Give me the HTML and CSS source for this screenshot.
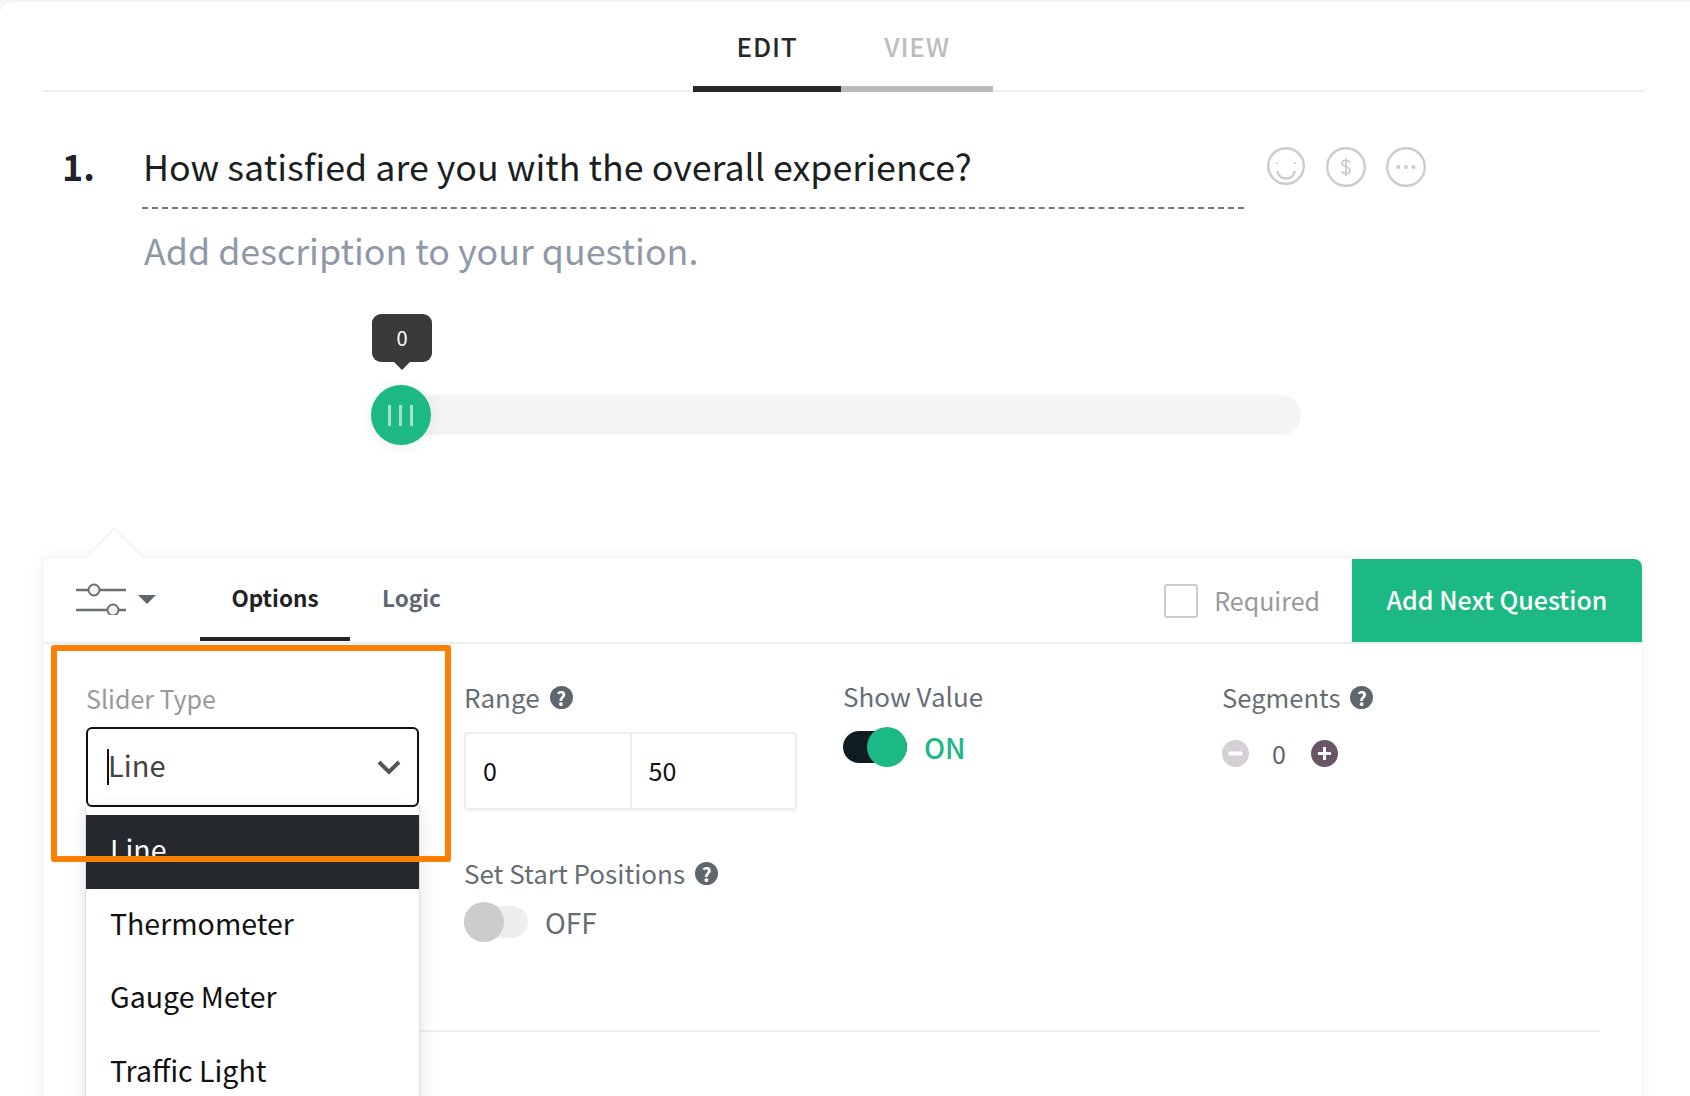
FILE: index.html
```html
<!DOCTYPE html>
<html lang="en">
<head>
<meta charset="utf-8">
<title>Survey question editor</title>
<link rel="stylesheet" href="styles.css">
</head>
<body>
<div class="page">
  <nav class="mode-tabs">
    <a class="mode-tab mode-edit">EDIT</a>
    <a class="mode-tab mode-view">VIEW</a>
  </nav>

  <section class="question">
    <div class="q-number">1.</div>
    <div class="q-main">
      <div class="q-title">How satisfied are you with the overall experience?</div>
      <div class="q-desc">Add description to your question.</div>
    </div>
    <div class="q-icons">
      <svg class="q-icon" width="38" height="38" viewBox="0 0 38 38"><circle cx="19" cy="19" r="17.800"/><path d="M10 24c1.500 5 5 7.500 9 7.500s7.500-2.500 9-7.500"/><circle class="dot" cx="10" cy="16" r="1"/><circle class="dot" cx="28" cy="16" r="1"/></svg>
      <svg class="q-icon" width="40" height="40" viewBox="0 0 40 40"><circle cx="20" cy="20" r="18.800"/><path class="dollar" d="M24 15.500c-.7-1.400-2-2.200-4-2.200-2.300 0-3.900 1.100-3.900 3 0 4.300 8 2.600 8 7.300 0 2-1.800 3.100-4.100 3.100-2 0-3.400-.8-4.200-2.200M20 11v18"/></svg>
      <svg class="q-icon" width="40" height="40" viewBox="0 0 40 40"><circle cx="20" cy="20" r="18.800"/><circle class="dot-big" cx="12.500" cy="20" r="2"/><circle class="dot-big" cx="20" cy="20" r="2"/><circle class="dot-big" cx="27.500" cy="20" r="2"/></svg>
    </div>
  </section>

  <div class="slider">
    <div class="slider-track"></div>
    <div class="slider-thumb"><i></i><i></i><i></i></div>
    <div class="slider-tip">0</div>
  </div>

  <section class="panel">
    <header class="panel-head">
      <div class="type-picker">
        <svg width="50" height="34" viewBox="0 0 50 34" class="sliders-icon"><path d="M0 9h12M24 9h26M0 29h31M43 29h7"/><circle cx="18" cy="9" r="5.500"/><circle cx="37" cy="29" r="5.500"/></svg>
        <span class="caret"></span>
      </div>
      <a class="panel-tab is-active">Options</a>
      <a class="panel-tab">Logic</a>
      <label class="required"><span class="checkbox"></span>Required</label>
      <button class="add-next">Add Next Question</button>
    </header>

    <div class="panel-body">
      <div class="field field-type">
        <div class="label label-muted">Slider Type</div>
        <div class="select">
          <span class="text-cursor"></span><span class="select-value">Line</span>
          <svg class="chevron" width="24" height="16" viewBox="0 0 24 16"><path d="M2 3l10 10L22 3"/></svg>
          <ul class="dropdown">
            <li class="is-selected">Line</li>
            <li>Thermometer</li>
            <li>Gauge Meter</li>
            <li>Traffic Light</li>
          </ul>
        </div>
      </div>

      <div class="field field-range">
        <div class="label">Range <span class="help">?</span></div>
        <div class="range-box"><div class="range-cell">0</div><div class="range-cell">50</div></div>
      </div>

      <div class="field field-show">
        <div class="label">Show Value</div>
        <div class="toggle-row">
          <span class="toggle toggle-on"><span class="knob"></span></span>
          <span class="state state-on">ON</span>
        </div>
      </div>

      <div class="field field-segments">
        <div class="label">Segments <span class="help">?</span></div>
        <div class="stepper">
          <svg width="27" height="27" viewBox="0 0 27 27"><circle class="minus-bg" cx="13.500" cy="13.500" r="13.500"/><rect class="sign" x="6.500" y="11.500" width="14" height="4" rx="1"/></svg>
          <span class="stepper-value">0</span>
          <svg width="27" height="27" viewBox="0 0 27 27"><circle class="plus-bg" cx="13.500" cy="13.500" r="13.500"/><path class="sign" d="M12 7h3v5h5v3h-5v5h-3v-5H7v-3h5z"/></svg>
        </div>
      </div>

      <div class="field field-start">
        <div class="label">Set Start Positions <span class="help">?</span></div>
        <div class="toggle-row">
          <span class="toggle toggle-off"><span class="knob"></span></span>
          <span class="state">OFF</span>
        </div>
      </div>
    </div>
    <hr class="panel-rule">
    <div class="highlight"></div>
  </section>
</div>
</body>
</html>
```

FILE: styles.css
```css
* { box-sizing: border-box; }
html, body { margin: 0; height: 100%; }
body {
  background: #f5f5f5;
  font-family: "Noto Sans CJK JP", "Noto Sans", sans-serif;
  overflow: hidden;
}
.page {
  margin-top: 2px;
  height: 1094px;
  background: #fff;
  border-radius: 12px 0 0 0;
  overflow: hidden;
}

/* mode tabs */
.mode-tabs {
  display: flex;
  justify-content: center;
  height: 90px;
  margin: 0 46px 0 42px;
  border-bottom: 2px solid #eee;
}
.mode-tab {
  display: block;
  height: 90px;
  border-bottom: 6px solid;
  text-align: center;
  font-size: 26px;
  font-weight: 500;
  line-height: 88px;
  letter-spacing: .8px;
}
.mode-edit { width: 148px; color: #25282b; border-color: #25282b; }
.mode-view { width: 152px; color: #bdbdbd; border-color: #bbb; }

/* question */
.question { display: flex; padding: 48px 0 0 62px; }
.q-number {
  width: 80px;
  font-size: 36px;
  font-weight: 700;
  line-height: 50px;
  color: #1d2329;
}
.q-main { width: 1102px; }
.q-title {
  height: 69px;
  padding-left: 1px;
  border-bottom: 2px dashed #777;
  font-size: 35.800px;
  line-height: 50px;
  color: #1c1f22;
}
.q-desc {
  margin-top: 18px;
  padding-left: 2px;
  font-size: 35.800px;
  line-height: 44px;
  color: #8f98a8;
}
.q-icons { display: flex; gap: 20px; margin: 7px 0 0 23px; align-items: flex-start; }
.q-icon { fill: none; stroke: #ccc; stroke-width: 2.400; }
.q-icon:first-child { margin-right: 1px; }
.q-icon .dot { fill: #ccc; stroke: none; }
.q-icon .dot-big { fill: #ccc; stroke: none; }
.q-icon .dollar { stroke-width: 1.800; }

/* slider */
.slider {
  position: relative;
  display: flex;
  align-items: center;
  width: 930px;
  height: 60px;
  margin: 114px 0 0 371px;
}
.slider-track {
  flex: 1;
  height: 40px;
  margin-left: 20px;
  border-radius: 20px;
  background: #f4f4f4;
}
.slider-thumb {
  position: absolute;
  left: 0;
  top: 0;
  width: 60px;
  height: 60px;
  padding-right: 2px;
  display: flex;
  justify-content: center;
  align-items: center;
  gap: 8px;
  border-radius: 50%;
  background: #1cb985;
  box-shadow: 0 2px 14px rgba(0, 0, 0, .08);
}
.slider-thumb i { width: 3px; height: 21px; background: rgba(255, 255, 255, .6); }
.slider-tip {
  position: absolute;
  left: 1px;
  top: -71px;
  width: 60px;
  height: 48px;
  border-radius: 9px;
  background: #3a3a3a;
  color: #fff;
  text-align: center;
  font-size: 20px;
  line-height: 48px;
}
.slider-tip::after {
  content: "";
  position: absolute;
  left: 22px;
  top: 48px;
  border: 8px solid transparent;
  border-top-color: #3a3a3a;
}

/* panel */
.panel {
  position: relative;
  height: 640px;
  margin: 113px 48px 0 43px;
  border-radius: 8px 8px 0 0;
  background: #fff;
  box-shadow: 0 0 0 1px #f4f4f4, 0 0 18px rgba(0, 0, 0, .06);
}
.panel::before {
  content: "";
  position: absolute;
  left: 50px;
  top: -21px;
  width: 42px;
  height: 42px;
  background: #fff;
  border: solid #eee;
  border-width: 1px 0 0 1px;
  transform: rotate(45deg);
}
.panel-head {
  position: relative;
  display: flex;
  height: 86px;
  border-bottom: 2px solid #eee;
  border-radius: 8px 8px 0 0;
  background: #fff;
}
.type-picker { display: flex; align-items: center; width: 157px; padding-left: 33px; }
.sliders-icon { fill: none; stroke: #6b7075; stroke-width: 2.500; margin-top: -4px; }
.sliders-icon circle { fill: #f3f3f3; stroke-width: 2; }
.caret {
  margin: -2px 0 0 12px;
  border: 9px solid transparent;
  border-top: 9px solid #5f6670;
  border-bottom: 0;
}
.panel-tab {
  display: block;
  padding: 0 31px;
  margin-bottom: 1px;
  font-size: 22.500px;
  font-weight: 700;
  line-height: 78px;
  color: #5f6670;
}
.panel-tab.is-active {
  width: 150px;
  padding: 0;
  text-align: center;
  color: #222;
  border-bottom: 4px solid #222;
}
.panel-tab.is-active + .panel-tab { padding-left: 32px; }
.required {
  display: flex;
  align-items: center;
  gap: 16px;
  margin-left: auto;
  padding: 0 32px 1px 0;
  font-size: 25px;
  color: #999;
}
.checkbox { width: 34px; height: 34px; margin-top: 2px; border: 2px solid #ccc; border-radius: 3px; }
.add-next {
  width: 290px;
  height: 83px;
  margin-top: 1px;
  padding: 0 0 3px;
  border: 0;
  border-radius: 0 8px 0 0;
  background: #1cb985;
  color: #fff;
  font: 500 25px/80px "Noto Sans CJK JP", "Noto Sans", sans-serif;
}

/* fields */
.panel-body {
  display: grid;
  grid-template-columns: 378px 379px 379px 1fr;
  grid-template-rows: 127px auto;
  row-gap: 48px;
  padding: 39px 0 0 43px;
}
.field-type { grid-row: 1 / span 2; }
.field-start { grid-column: 2; grid-row: 2; }
.label {
  display: flex;
  align-items: center;
  gap: 10px;
  font-size: 26px;
  line-height: 30px;
  color: #666d75;
}
.label-muted { color: #999; font-size: 25px; }
.field-range .label { margin-top: -1px; }
.field-show .label { margin-top: -2px; }
.field-show .toggle-row { margin-top: 16px; }
.field-segments .label { margin-top: -1px; font-size: 25.600px; }
.help {
  width: 23px;
  height: 23px;
  border-radius: 50%;
  background: #5f666e;
  color: #fff;
  text-align: center;
  font-size: 19px;
  font-weight: 700;
  line-height: 23px;
}
.select {
  position: relative;
  display: flex;
  align-items: center;
  width: 333px;
  height: 80px;
  margin-top: 14px;
  padding-left: 19px;
  border: 2px solid #111;
  border-radius: 6px;
  background: #fff;
  font-size: 29px;
  color: #444;
}
.select-value { margin-bottom: 6px; }
.text-cursor { width: 2px; height: 36px; background: #111; margin-right: -1px; }
.chevron { position: absolute; right: 16px; top: 30px; fill: none; stroke: #555; stroke-width: 4; }
.dropdown {
  position: absolute;
  left: -3px;
  right: -3px;
  top: 78px;
  margin: 0;
  padding: 8px 0 0;
  list-style: none;
  background: #fff;
  border: solid #ddd;
  border-width: 0 1px;
  box-shadow: 0 4px 16px rgba(0, 0, 0, .12);
}
.dropdown li {
  height: 73.500px;
  padding-left: 24px;
  font-size: 28.500px;
  line-height: 68px;
  color: #111;
}
.dropdown .is-selected { background: #25282d; color: #fff; }
.range-box {
  display: flex;
  width: 333px;
  height: 78px;
  margin-top: 20px;
  border: 2px solid #eee;
  border-radius: 4px;
  box-shadow: 0 2px 3px rgba(0, 0, 0, .05);
}
.range-cell {
  flex: 1;
  padding-left: 17px;
  font-size: 25px;
  line-height: 73px;
  color: #111;
}
.range-cell + .range-cell { border-left: 2px solid #eee; }
.toggle-row { display: flex; align-items: center; gap: 17px; margin-top: 14px; }
.toggle { position: relative; display: block; width: 64px; height: 32px; border-radius: 16px; }
.toggle-on { background: #0f1c22; }
.toggle-off { background: #eee; }
.knob {
  position: absolute;
  top: -4px;
  width: 40px;
  height: 40px;
  border-radius: 50%;
}
.toggle-on .knob { right: 0; background: #1cb985; }
.toggle-off .knob { left: 0; background: #ccc; }
.state { font-size: 28px; line-height: 40px; color: #666d75; }
.state-on { color: #1cb985; font-weight: 500; }
.stepper { display: flex; align-items: center; gap: 23px; margin-top: 28px; }
.stepper-value { width: 16px; font-size: 25px; line-height: 27px; color: #5f666e; }
.minus-bg { fill: #d5d0d5; }
.plus-bg { fill: #6b5466; }
.sign { fill: #fff; }
.panel-rule {
  height: 2px;
  margin: 88px 42px 0 44px;
  border: 0;
  background: #eee;
}
.highlight {
  position: absolute;
  left: 8px;
  top: 87px;
  width: 400px;
  height: 217px;
  border: 6px solid #ff7f00;
  border-radius: 3px;
}
```
